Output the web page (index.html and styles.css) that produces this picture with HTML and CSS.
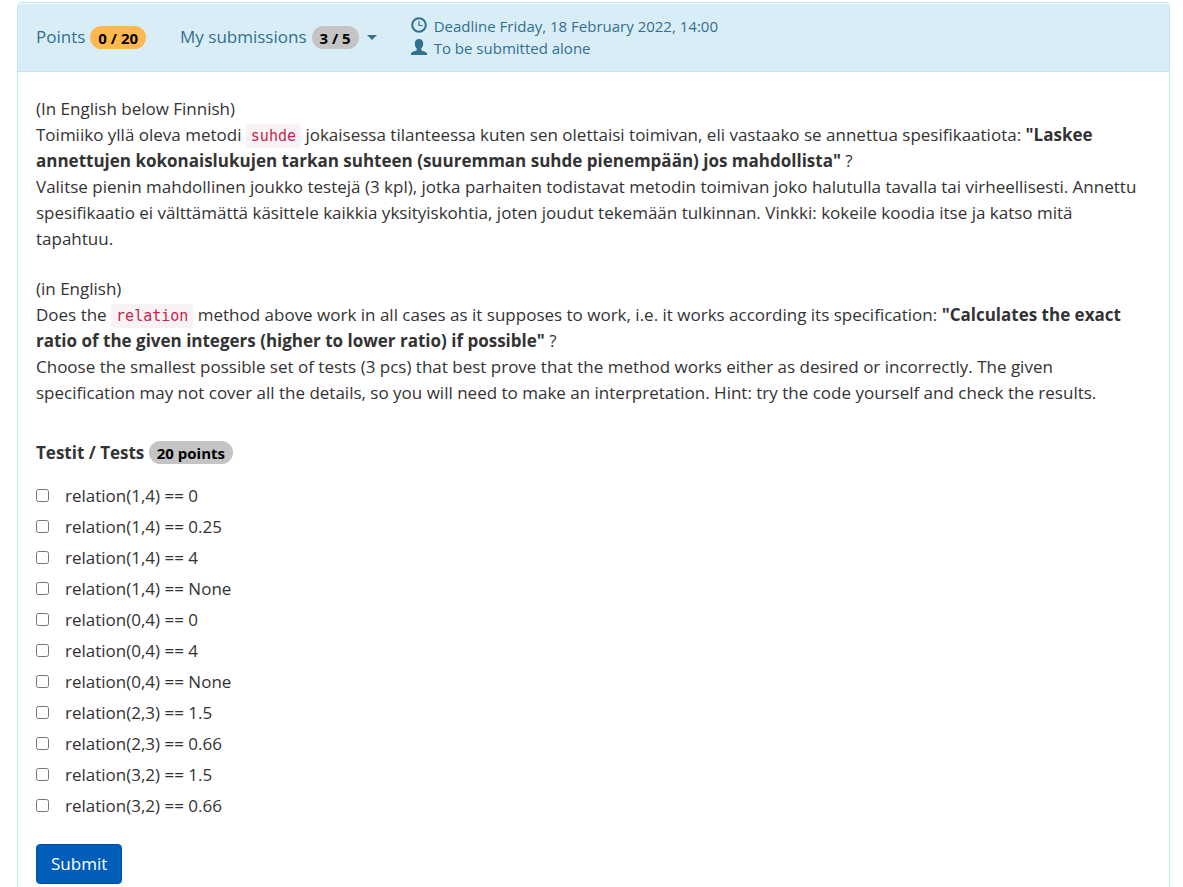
FILE: index.html
```html
<!DOCTYPE html>
<html lang="en">

<head>
  <meta charset="utf-8">
  <meta name="viewport" content="width=device-width, initial-scale=1">
  <title>Exercise</title>
  <link rel="stylesheet" href="styles.css">
</head>

<body>
  <main class="panel">
    <header class="panel-heading">
      <div class="status">Points <span class="badge badge-warning">0 / 20</span></div>
      <button type="button" class="dropdown-toggle">My submissions <span class="badge">3 / 5</span><span class="caret"></span></button>
      <ul class="info">
        <li>
          <svg class="icon" viewBox="0 0 16 16" aria-hidden="true">
            <circle cx="8" cy="8" r="6.8" fill="none" stroke="currentColor" stroke-width="2" />
            <path d="M8 4v4.5h3.5" fill="none" stroke="currentColor" stroke-width="1.2" />
          </svg>
          Deadline Friday, 18 February 2022, 14:00
        </li>
        <li>
          <svg class="icon" viewBox="0 0 16 16" aria-hidden="true">
            <path fill="currentColor" d="M8 0C5.300 0 3.800 1.800 3.800 4.600c0 2 .7 3.900 1.900 5v1.300C5.500 12 .3 12.300 0 14.600V16h16v-1.400c-.3-2.300-5.500-2.600-5.700-3.700V9.600c1.200-1.100 1.900-3 1.900-5C12.200 1.800 10.700 0 8 0z" />
          </svg>
          To be submitted alone
        </li>
      </ul>
    </header>

    <div class="panel-body">
      <p lang="fi">
        (In English below Finnish)<br>
        Toimiiko yllä oleva metodi <code>suhde</code> jokaisessa tilanteessa kuten sen olettaisi toimivan, eli vastaako se annettua spesifikaatiota: <strong>"Laskee annettujen kokonaislukujen tarkan suhteen (suuremman suhde pienempään) jos mahdollista"</strong> ?<br>
        Valitse pienin mahdollinen joukko testejä (3 kpl), jotka parhaiten todistavat metodin toimivan joko halutulla tavalla tai virheellisesti. Annettu spesifikaatio ei välttämättä käsittele kaikkia yksityiskohtia, joten joudut tekemään tulkinnan. Vinkki: kokeile koodia itse ja katso mitä tapahtuu.
      </p>
      <p>
        (in English)<br>
        Does the <code>relation</code> method above work in all cases as it supposes to work, i.e. it works according its specification: <strong>"Calculates the exact ratio of the given integers (higher to lower ratio) if possible"</strong> ?<br>
        Choose the smallest possible set of tests (3 pcs) that best prove that the method works either as desired or incorrectly. The given specification may not cover all the details, so you will need to make an interpretation. Hint: try the code yourself and check the results.
      </p>

      <form>
        <fieldset>
          <legend>Testit / Tests <span class="badge">20 points</span></legend>
          <label class="checkbox"><input type="checkbox" name="test" value="0">relation(1,4) == 0</label>
          <label class="checkbox"><input type="checkbox" name="test" value="1">relation(1,4) == 0.25</label>
          <label class="checkbox"><input type="checkbox" name="test" value="2">relation(1,4) == 4</label>
          <label class="checkbox"><input type="checkbox" name="test" value="3">relation(1,4) == None</label>
          <label class="checkbox"><input type="checkbox" name="test" value="4">relation(0,4) == 0</label>
          <label class="checkbox"><input type="checkbox" name="test" value="5">relation(0,4) == 4</label>
          <label class="checkbox"><input type="checkbox" name="test" value="6">relation(0,4) == None</label>
          <label class="checkbox"><input type="checkbox" name="test" value="7">relation(2,3) == 1.5</label>
          <label class="checkbox"><input type="checkbox" name="test" value="8">relation(2,3) == 0.66</label>
          <label class="checkbox"><input type="checkbox" name="test" value="9">relation(3,2) == 1.5</label>
          <label class="checkbox"><input type="checkbox" name="test" value="10">relation(3,2) == 0.66</label>
        </fieldset>
        <button type="submit" class="btn">Submit</button>
      </form>
    </div>
  </main>
</body>

</html>
```
FILE: styles.css
```css
* {
  box-sizing: border-box;
}

:root {
  --info-bg: #d9edf7;
  --info-border: #bce8f1;
  --info-text: #31708f;
  --text-color: #333333;
  --primary: #005eb8;
}

body {
  margin: 0;
  padding: 2px 13px 0 17px;
  background-color: #ffffff;
  color: var(--text-color);
  font-family: "Open Sans", "Noto Sans", sans-serif;
  font-size: 17px;
  line-height: 26px;
}

.panel {
  border: 1px solid var(--info-border);
  border-bottom: 0;
  border-radius: 5px 5px 0 0;
  padding: 1px 0 4px;
}

.panel-heading {
  display: flex;
  align-items: flex-start;
  padding: 10px 18px 11px;
  border-bottom: 1px solid var(--info-border);
  border-radius: 4px 4px 0 0;
  background-color: var(--info-bg);
  color: var(--info-text);
}

.status,
.dropdown-toggle {
  display: flex;
  align-items: center;
  gap: 5px;
  padding: 10px 0;
}

.dropdown-toggle {
  margin: 0 34px;
  border: 0;
  background: none;
  color: inherit;
  font: inherit;
  cursor: pointer;
}

.badge {
  display: inline-block;
  padding: 3px 8px 1px;
  border-radius: 12px;
  background-color: #c4c4c4;
  color: #000000;
  font-size: 15px;
  font-weight: bold;
  line-height: 19px;
}

.badge-warning {
  background-color: #ffb84d;
}

.caret {
  margin-left: 3px;
  border-top: 5px solid;
  border-right: 5px solid transparent;
  border-left: 5px solid transparent;
}

.info {
  margin: 0;
  padding: 1px 0;
  list-style: none;
  font-size: 15px;
  line-height: 22px;
}

.info li {
  display: flex;
  gap: 7px;
}

.icon {
  width: 16px;
  height: 16px;
  margin-top: 2px;
}

.panel-body {
  padding: 24px 18px 0;
}

p {
  margin: 0 0 24px;
}

code {
  padding: 3px 5px;
  border-radius: 4px;
  background-color: #f9f2f4;
  color: #c7254e;
  font-family: "DejaVu Sans Mono", monospace;
  font-size: 15px;
  line-height: 16px;
}

fieldset {
  margin: 0 0 20px;
  padding: 0;
  border: 0;
}

legend {
  padding: 10px 0 17px;
  font-weight: bold;
}

.checkbox {
  display: flex;
  align-items: center;
  gap: 16px;
  padding-bottom: 5px;
}

.checkbox input {
  width: 13px;
  height: 13px;
  margin: 0 0 2px;
}

.btn {
  padding: 6px 14px;
  border: 1px solid #0052a3;
  border-radius: 4px;
  background-color: var(--primary);
  color: #ffffff;
  font: inherit;
  cursor: pointer;
}

.btn:hover {
  background-color: #004a91;
}
```
